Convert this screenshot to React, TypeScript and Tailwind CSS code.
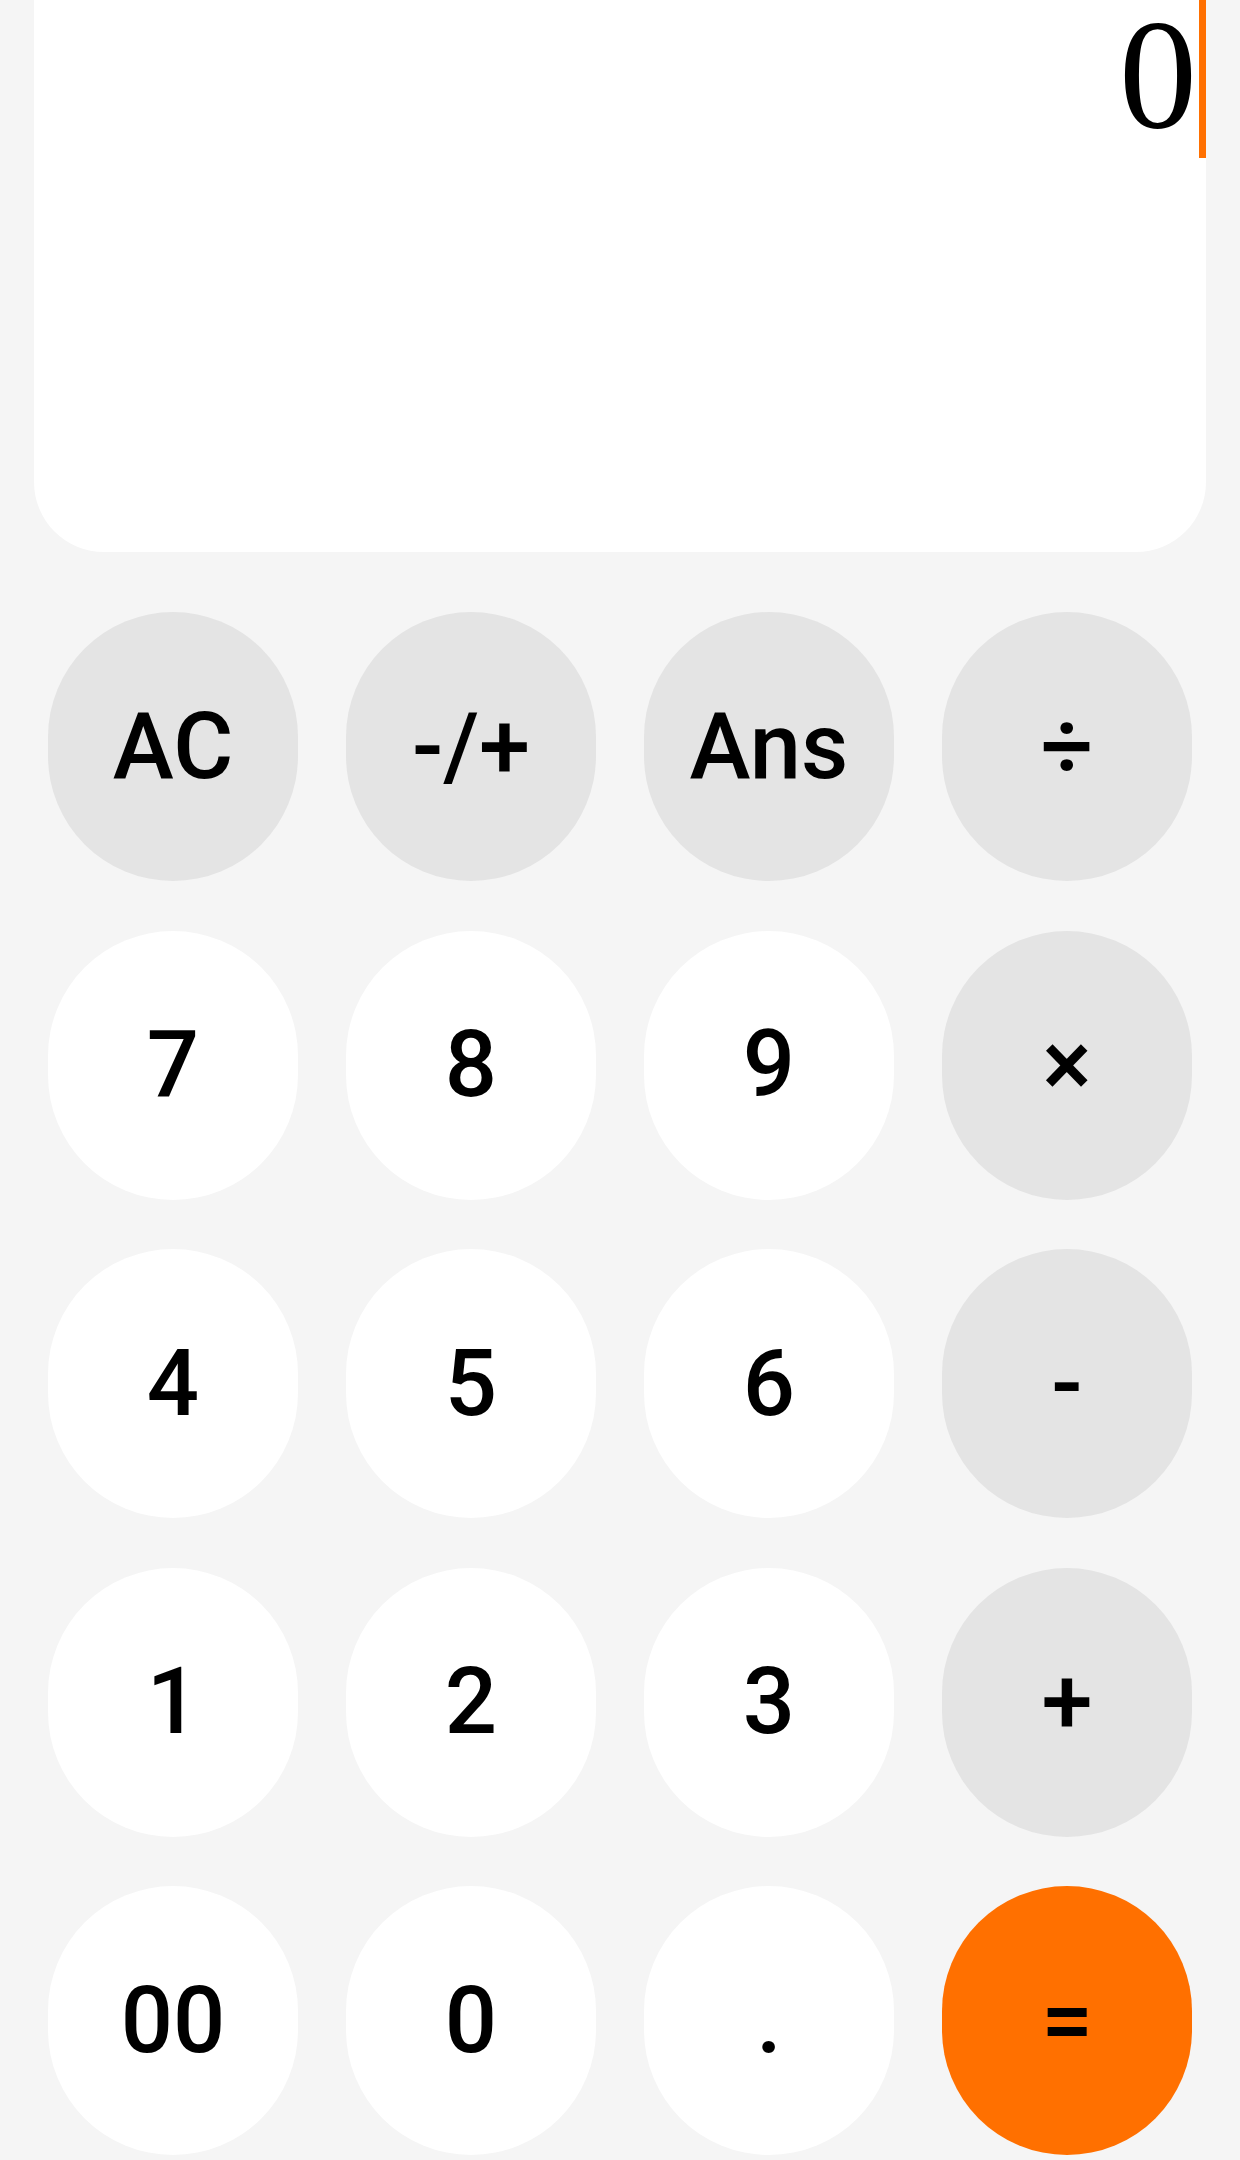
const KEYS: { label: string; kind: "fn" | "num" | "eq" }[] = [
  { label: "AC", kind: "fn" },
  { label: "-/+", kind: "fn" },
  { label: "Ans", kind: "fn" },
  { label: "÷", kind: "fn" },
  { label: "7", kind: "num" },
  { label: "8", kind: "num" },
  { label: "9", kind: "num" },
  { label: "×", kind: "fn" },
  { label: "4", kind: "num" },
  { label: "5", kind: "num" },
  { label: "6", kind: "num" },
  { label: "-", kind: "fn" },
  { label: "1", kind: "num" },
  { label: "2", kind: "num" },
  { label: "3", kind: "num" },
  { label: "+", kind: "fn" },
  { label: "00", kind: "num" },
  { label: "0", kind: "num" },
  { label: ".", kind: "num" },
  { label: "=", kind: "eq" },
];

export default function App() {
  return (
    <div className="min-h-screen bg-[#f5f5f5] font-['Roboto',sans-serif]">
      <div className="px-[34px]">
        <div className="h-[552px] bg-white rounded-b-[70px] flex justify-end items-start">
          <span className="font-['Liberation_Serif',serif] text-[156px] leading-[150px] text-black">0</span>
          <span className="ml-[2px] w-[7px] h-[158px] bg-[#ff7000]" />
        </div>
      </div>

      <div className="mt-[60px] px-[48px] grid grid-cols-4 gap-x-[48px] gap-y-[49.5px]">
        {KEYS.map((k) => (
          <button
            key={k.label}
            className={
              "h-[269px] rounded-full flex items-center justify-center text-[92px] font-medium text-black " +
              (k.kind === "fn" ? "bg-[#e4e4e4]" : k.kind === "eq" ? "bg-[#ff7000]" : "bg-white")
            }
          >
            {k.label}
          </button>
        ))}
      </div>
    </div>
  );
}
